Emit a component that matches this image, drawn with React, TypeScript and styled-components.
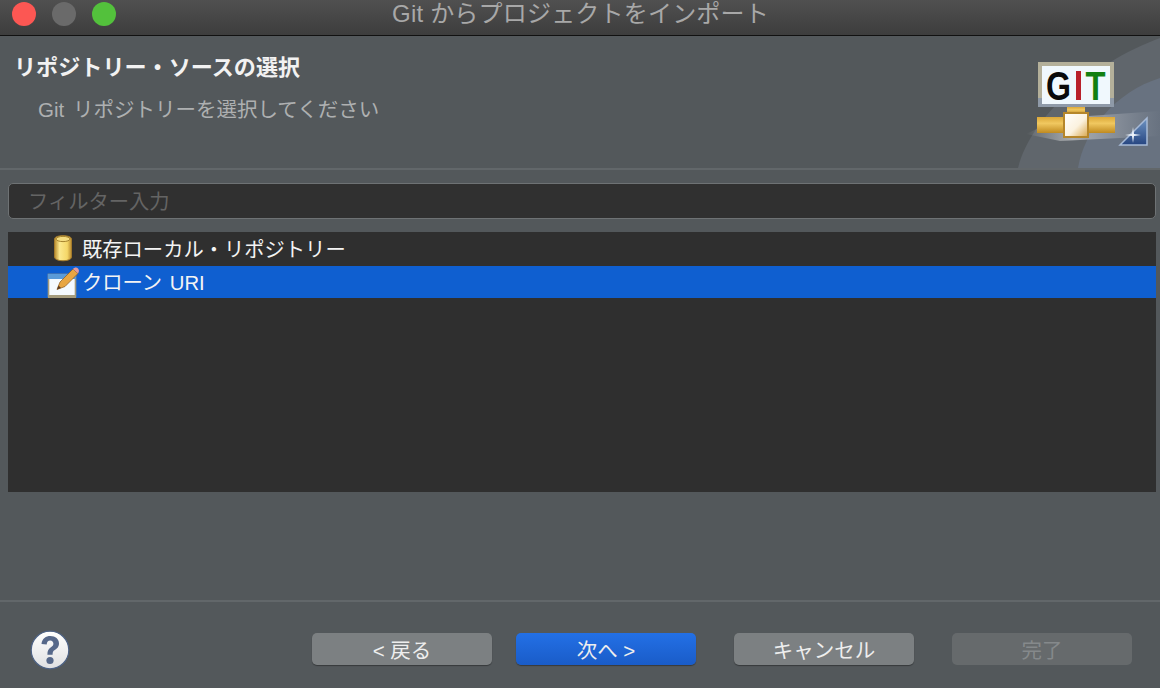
import React from "react";
import styled, { createGlobalStyle } from "styled-components";

const Global = createGlobalStyle`
  html, body { margin: 0; padding: 0; background: #53585b; }
  body { font-family: "Liberation Sans", "Noto Sans CJK JP", sans-serif; }
  * { box-sizing: border-box; }
`;

const Window = styled.div`
  width: 1160px; height: 688px; display: flex; flex-direction: column;
  background: #53585b; overflow: hidden;
`;
const TitleBar = styled.div`
  height: 36px; flex: none; position: relative; display: flex; align-items: center; justify-content: center;
  background: linear-gradient(#505050, #3d3d3d); border-bottom: 1px solid #111;
`;
const Lights = styled.div`
  position: absolute; left: 12px; top: 2px; display: flex; gap: 16px;
`;
const Light = styled.span<{ $c: string }>`
  width: 24px; height: 24px; border-radius: 50%; background: ${p => p.$c};
`;
const TitleText = styled.div`
  color: #a8a8a8; font-size: 24px; line-height: 30px; margin: -7px 0 0 1px; letter-spacing: 0.2px; white-space: nowrap;
`;
const Header = styled.div`
  height: 134px; flex: none; position: relative; border-bottom: 2px solid #62676a; padding: 17px 0 0 14px; overflow: hidden;
`;
const HeaderTitle = styled.div`
  color: #f2f2f2; font-size: 22.1px; font-weight: 700; line-height: 30px; white-space: nowrap;
`;
const HeaderDesc = styled.div`
  color: #aeb0b1; font-size: 20.5px; line-height: 30px; margin: 12px 0 0 24px; word-spacing: 3px; white-space: nowrap;
`;
const Banner = styled.svg`
  position: absolute; right: 0; top: 0;
`;
const Content = styled.div`
  flex: none; height: 430px; padding: 13px 4px 0 8px; display: flex; flex-direction: column;
`;
const Filter = styled.div`
  height: 36px; flex: none; background: #303030; border: 1px solid #6e7274; border-radius: 5px;
  color: #646464; font-size: 20.3px; line-height: 36px; padding-left: 19px;
`;
const Tree = styled.div`
  margin-top: 13px; height: 260px; flex: none; background: #2f2f2f;
`;
const Row = styled.div<{ $selected?: boolean; $h: number }>`
  height: ${p => p.$h}px; display: flex; align-items: center; position: relative; padding: 0 0 2px 74px;
  background: ${p => (p.$selected ? "#0f5fd0" : "transparent")};
  color: #f4f4f4; font-size: 20.3px; word-spacing: 2px; white-space: nowrap;
`;
const RowIcon = styled.svg`
  position: absolute; left: 32px; top: 0;
`;
const Footer = styled.div`
  flex: 1; border-top: 2px solid #62676a; display: flex; align-items: flex-start; padding: 31px 28px 0 30px;
`;
const Help = styled.svg`
  flex: none; margin-right: 242px; margin-top: -3px;
`;
const Buttons = styled.div`
  display: flex;
`;
const Btn = styled.div<{ $kind?: "primary" | "disabled"; $ml: number }>`
  width: 180px; height: 32px; margin-left: ${p => p.$ml}px; border-radius: 5px; display: flex; align-items: center; justify-content: center;
  font-size: 20.5px; white-space: nowrap;
  color: ${p => (p.$kind === "disabled" ? "#85898b" : "#eeeeee")};
  background: ${p => p.$kind === "primary" ? "linear-gradient(#2370e6, #1a5cc8)" : p.$kind === "disabled" ? "#666a6c" : "#7c8082"};
  box-shadow: ${p => (p.$kind === "disabled" ? "none" : "0 1px 1px rgba(0,0,0,0.35)")};
`;

const GitBanner = () => (
  <Banner width="160" height="132" viewBox="0 0 160 132">
    <defs>
      <linearGradient id="pipe" x1="0" y1="0" x2="0" y2="1">
        <stop offset="0" stopColor="#dca838" /><stop offset="0.4" stopColor="#f0c860" /><stop offset="1" stopColor="#c08a20" />
      </linearGradient>
      <linearGradient id="cube" x1="0" y1="0" x2="1" y2="1">
        <stop offset="0" stopColor="#ffffff" /><stop offset="0.55" stopColor="#fbf2df" /><stop offset="1" stopColor="#d8a548" />
      </linearGradient>
      <linearGradient id="tri" x1="0" y1="0" x2="0" y2="1">
        <stop offset="0" stopColor="#6f95c4" /><stop offset="1" stopColor="#264580" />
      </linearGradient>
      <linearGradient id="glow" x1="0" y1="0" x2="1" y2="0">
        <stop offset="0" stopColor="#bfc1c2" stopOpacity="0" /><stop offset="0.35" stopColor="#c4c6c8" stopOpacity="0.75" /><stop offset="1" stopColor="#a8aeb8" stopOpacity="0" />
      </linearGradient>
    </defs>
    <path d="M18 132 C30 82 90 28 160 2 L160 132 Z" fill="#60666c" />
    <path d="M78 132 C84 95 115 56 160 42 L160 132 Z" fill="#687280" />
    <path d="M26 98 L60 82 L160 75 L160 100 L60 105 Z" fill="url(#glow)" />
    <rect x="38" y="26" width="76" height="45" fill="#b4b09a" />
    <rect x="38" y="62" width="76" height="9" fill="#8f9aa8" />
    <rect x="42" y="30" width="68" height="38" fill="#f0f8fd" />
    <text x="46" y="64" fontFamily="'Liberation Sans', sans-serif" fontWeight="700" fontSize="41" fill="#0a0a0a" textLength="25" lengthAdjust="spacingAndGlyphs">G</text>
    <rect x="76" y="35" width="5" height="29" fill="#b8202a" />
    <text x="85.5" y="64" fontFamily="'Liberation Sans', sans-serif" fontWeight="700" fontSize="41" fill="#128012" textLength="20" lengthAdjust="spacingAndGlyphs">T</text>
    <rect x="67" y="71" width="18" height="7" fill="url(#pipe)" />
    <rect x="37" y="81" width="78" height="16" fill="url(#pipe)" />
    <rect x="64" y="77" width="24" height="24" fill="url(#cube)" stroke="#b5862a" strokeWidth="2" />
    <path d="M120 109 L147 109 L147 82 Z" fill="url(#tri)" stroke="#a7bad6" strokeWidth="1.5" />
    <path d="M133 91 L134 98 L141 99 L134 100 L133 107 L132 100 L125 99 L132 98 Z" fill="#eef4fb" />
  </Banner>
);

const Cylinder = () => (
  <RowIcon width="40" height="34" viewBox="0 0 40 34">
    <defs>
      <linearGradient id="cyl" x1="0" y1="0" x2="1" y2="0">
        <stop offset="0" stopColor="#b88a2a" /><stop offset="0.3" stopColor="#fbe88e" /><stop offset="0.75" stopColor="#f5d768" /><stop offset="1" stopColor="#b98a2e" />
      </linearGradient>
    </defs>
    <path d="M14.5 7 C14.5 2.5 31.5 2.5 31.5 7 L31.5 25 C31.5 30 14.5 30 14.5 25 Z" fill="url(#cyl)" stroke="#a27a2c" strokeWidth="1" />
    <ellipse cx="23" cy="7" rx="7" ry="2.6" fill="#f4dc80" stroke="#a6842f" strokeWidth="1" />
  </RowIcon>
);

const Pencil = () => (
  <RowIcon width="40" height="32" viewBox="0 0 40 32">
    <rect x="8.5" y="8.5" width="27" height="22" fill="#f4faff" stroke="#a49c7e" strokeWidth="1.6" />
    <rect x="8" y="8" width="28" height="5" fill="#5b9bd8" />
    <rect x="8" y="29" width="28" height="3" fill="#a49c7e" />
    <path d="M17 23.5 L20 16 L33 3 L38 7.5 L25 20.5 Z" fill="#e8a642" stroke="#8a5a20" strokeWidth="0.7" />
    <path d="M33 3 C34.5 1 37 1 38 2.5 C39.5 4 39 6 38 7.5 Z" fill="#e79a9a" />
    <path d="M17 23.5 L18.5 19.5 L21 22 Z" fill="#5a3a22" />
  </RowIcon>
);

const HelpIcon = () => (
  <Help width="40" height="40" viewBox="0 0 40 40">
    <defs>
      <linearGradient id="hb" x1="0" y1="0" x2="0" y2="1">
        <stop offset="0" stopColor="#ffffff" /><stop offset="1" stopColor="#dfe0e2" />
      </linearGradient>
    </defs>
    <circle cx="20" cy="20" r="18.8" fill="url(#hb)" stroke="#4d6285" strokeWidth="1.2" />
    <path d="M11.5 14 C12 8.5 16 6 20.3 6 C25.5 6 29 9.2 29 13.4 C29 17 26.8 18.6 24.8 20 C23 21.2 22.6 22 22.6 24.8 L17.4 24.8 C17.4 20.8 18.4 19.2 20.6 17.6 C22.6 16.2 23.4 15.4 23.4 13.8 C23.4 12 22.2 10.6 20.2 10.6 C18 10.6 16.9 12.2 16.7 14.6 Z" fill="#56688a" />
    <circle cx="20" cy="30.5" r="3.6" fill="#56688a" />
  </Help>
);

export default function App() {
  return (
    <Window>
      <Global />
      <TitleBar>
        <Lights>
          <Light $c="#fc5753" />
          <Light $c="#6a6a6a" />
          <Light $c="#53c13c" />
        </Lights>
        <TitleText>Git からプロジェクトをインポート</TitleText>
      </TitleBar>
      <Header>
        <GitBanner />
        <HeaderTitle>リポジトリー・ソースの選択</HeaderTitle>
        <HeaderDesc>Git リポジトリーを選択してください</HeaderDesc>
      </Header>
      <Content>
        <Filter>フィルター入力</Filter>
        <Tree>
          <Row $h={34}>
            <Cylinder />
            既存ローカル・リポジトリー
          </Row>
          <Row $h={32} $selected>
            <Pencil />
            クローン URI
          </Row>
        </Tree>
      </Content>
      <Footer>
        <HelpIcon />
        <Buttons>
          <Btn $ml={0}>&lt; 戻る</Btn>
          <Btn $ml={24} $kind="primary">次へ &gt;</Btn>
          <Btn $ml={38}>キャンセル</Btn>
          <Btn $ml={38} $kind="disabled">完了</Btn>
        </Buttons>
      </Footer>
    </Window>
  );
}
